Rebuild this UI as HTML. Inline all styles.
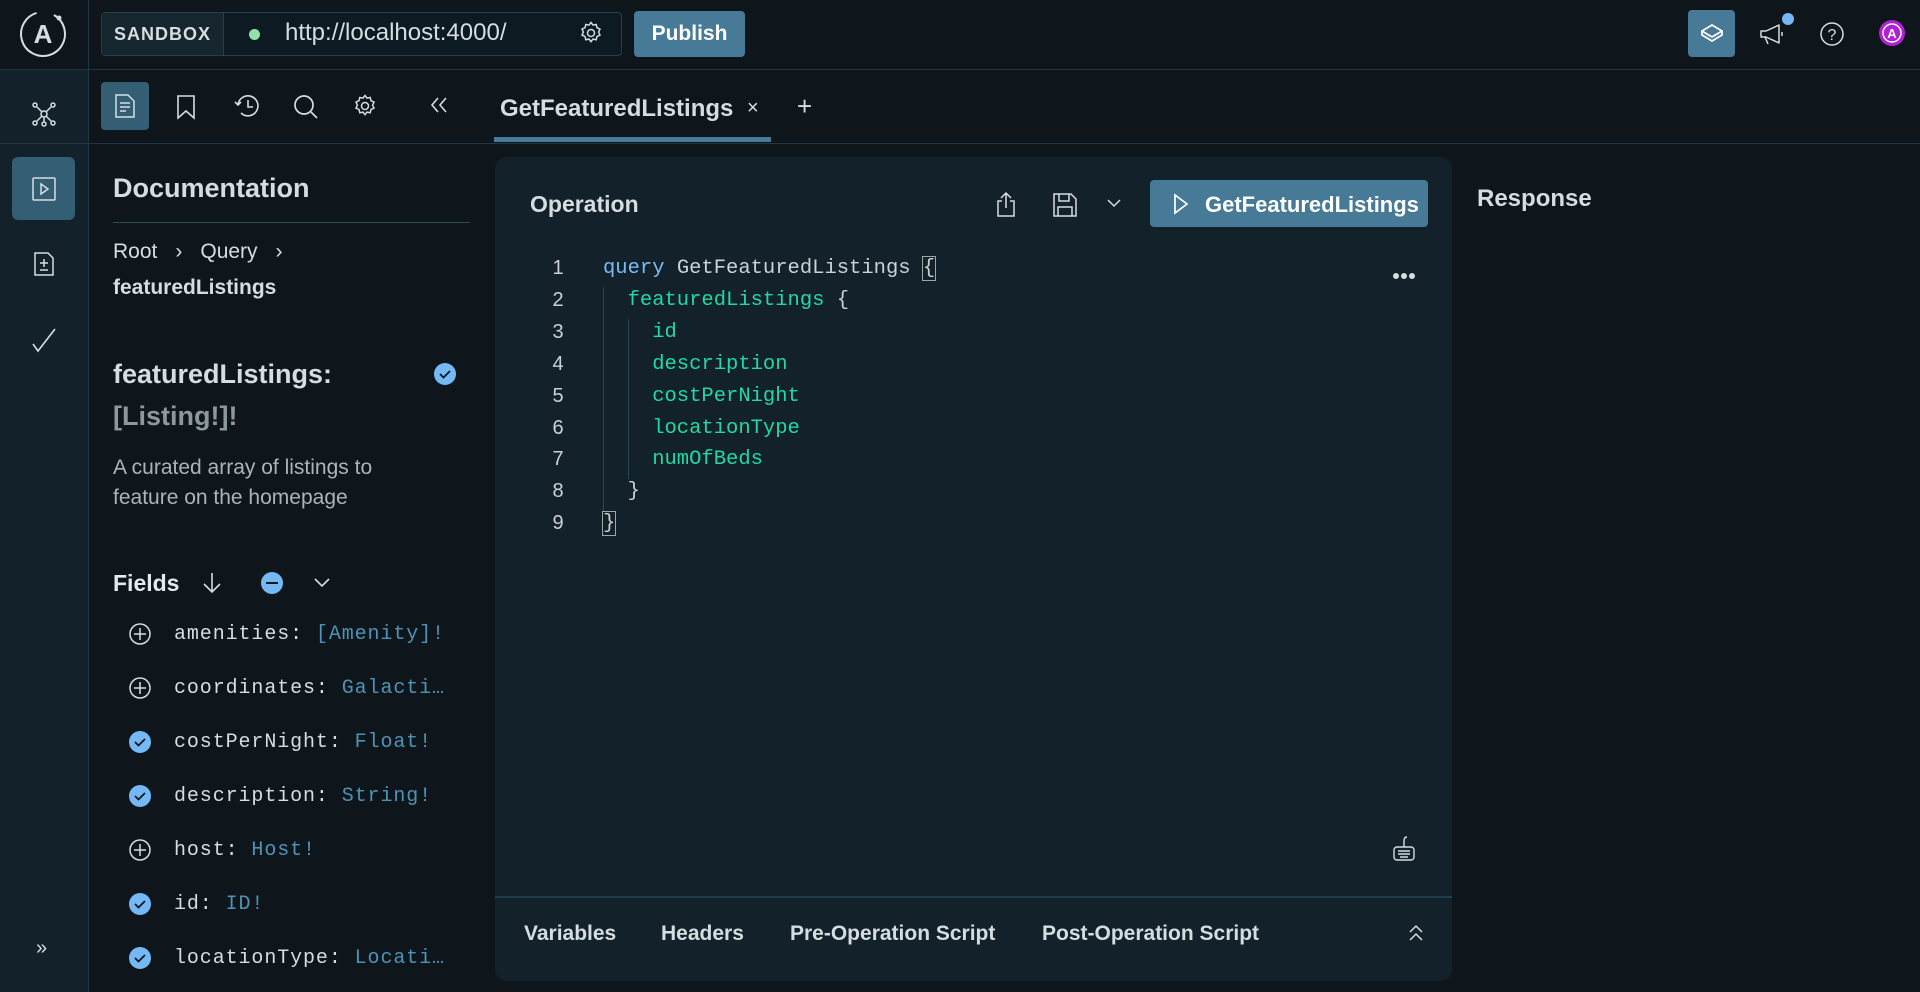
<!DOCTYPE html>
<html><head><meta charset="utf-8"><style>
*{box-sizing:border-box;margin:0;padding:0}
body{width:1920px;height:992px;background:#0e161c;font-family:"Liberation Sans",sans-serif;color:#d6dde1;position:relative;overflow:hidden}
.a{position:absolute}
svg{position:absolute;overflow:visible}
.ln{position:absolute;left:540px;width:36px;text-align:center;font-size:20px;color:#c9d2d6}
.cd{position:absolute;left:603px;font-size:20.5px;white-space:pre;font-family:"Liberation Mono",monospace;color:#c9d2d6}
.g{color:#22d8a4}
.fr{position:absolute;left:174px;font-family:"Liberation Mono",monospace;font-size:20px;letter-spacing:0.9px;color:#d6dde1;white-space:nowrap}
.fr span{color:#4e93b6}
.tb{position:absolute;top:922px;font-size:21px;font-weight:bold;color:#d6dde1}
</style></head><body>
<div class="a" style="left:0;top:69px;width:1920px;height:1px;background:#1f3744"></div>
<div class="a" style="left:88px;top:0;width:1px;height:992px;background:#1f3744"></div>
<svg style="left:0;top:0" width="88" height="69"><circle cx="43" cy="34" r="22" fill="none" stroke="#d6dde1" stroke-width="2" stroke-dasharray="120 18" transform="rotate(-60 43 34)"/><circle cx="59" cy="18" r="2.5" fill="#d6dde1"/><text x="43" y="43" text-anchor="middle" font-family="Liberation Sans" font-weight="bold" font-size="26" fill="#d6dde1">A</text></svg>
<div class="a" style="left:101px;top:12px;width:521px;height:44px;border:1px solid #24404d;border-radius:4px;background:#0e1a21"></div>
<div class="a" style="left:102px;top:13px;width:122px;height:42px;background:#16262e;border-right:1px solid #24404d;font-size:18px;font-weight:bold;letter-spacing:1px;line-height:42px;text-align:center;color:#d6dde1">SANDBOX</div>
<div class="a" style="left:249px;top:29px;width:11px;height:11px;border-radius:50%;background:#8fe3a8"></div>
<div class="a" style="left:285px;top:19px;font-size:24px;color:#d6dde1">http://localhost:4000/</div>
<svg style="left:579px;top:21px" width="24" height="24" viewBox="0 0 24 24" fill="none" stroke="#d6dde1" stroke-width="1.5"><circle cx="12" cy="12" r="3.5"/><path d="M12 1.5l2 2.6 3.2-.6.8 3.2 3 1.4-1.4 3 1.4 3-3 1.4-.8 3.2-3.2-.6-2 2.6-2-2.6-3.2.6-.8-3.2-3-1.4 1.4-3-1.4-3 3-1.4.8-3.2 3.2.6z"/></svg>
<div class="a" style="left:634px;top:11px;width:111px;height:46px;background:#467a96;border-radius:4px;font-size:21px;font-weight:bold;color:#fff;line-height:46px;text-align:center">Publish</div>
<div class="a" style="left:1688px;top:10px;width:47px;height:47px;background:#467a96;border-radius:4px"></div>
<svg style="left:1699px;top:22px" width="26" height="24" viewBox="0 0 26 24" fill="none" stroke="#fff" stroke-width="1.8" stroke-linejoin="round"><path d="M13 3l10 6-10 6-10-6z"/><path d="M3 9v4l10 6 10-6V9"/></svg>
<svg style="left:1758px;top:20px" width="28" height="28" viewBox="0 0 28 28" fill="none" stroke="#d6dde1" stroke-width="1.5" stroke-linejoin="round"><path d="M3 11h5l13-6v18L8 17H3z"/><path d="M7 17l3 7"/><path d="M24 12v4"/></svg>
<div class="a" style="left:1782px;top:13px;width:12px;height:12px;border-radius:50%;background:#74b9f5"></div>
<svg style="left:1820px;top:22px" width="24" height="24"><circle cx="12" cy="12" r="11" fill="none" stroke="#d6dde1" stroke-width="1.5"/><text x="12" y="18" text-anchor="middle" font-family="Liberation Sans" font-size="16" fill="#d6dde1">?</text></svg>
<svg style="left:1878px;top:19px" width="28" height="28"><circle cx="14" cy="14" r="13" fill="#b21fd6"/><circle cx="14" cy="14" r="9" fill="none" stroke="#fff" stroke-width="1.5"/><text x="14" y="19" text-anchor="middle" font-family="Liberation Sans" font-weight="bold" font-size="13" fill="#fff">A</text></svg>

<div class="a" style="left:0;top:70px;width:88px;height:922px;background:#13222a"></div>
<svg style="left:31px;top:101px" width="26" height="26" viewBox="0 0 26 26" fill="none" stroke="#d6dde1" stroke-width="1.5"><circle cx="13" cy="13" r="3"/><circle cx="4" cy="4" r="2"/><circle cx="22" cy="4" r="2"/><circle cx="4" cy="22" r="2"/><circle cx="22" cy="22" r="2"/><circle cx="13" cy="23" r="2"/><path d="M6 6l5 5M20 6l-5 5M6 20l5-5M20 20l-5-5M13 16v5"/></svg>
<div class="a" style="left:12px;top:157px;width:63px;height:63px;background:#345e74;border-radius:6px"></div>
<svg style="left:32px;top:177px" width="24" height="24" viewBox="0 0 24 24" fill="none" stroke="#d6dde1" stroke-width="1.5"><rect x="1" y="1" width="22" height="22" rx="1"/><path d="M9 7l7 5-7 5z"/></svg>
<svg style="left:32px;top:252px" width="24" height="24" viewBox="0 0 24 24" fill="none" stroke="#d6dde1" stroke-width="1.5"><path d="M3 1h13l5 5v17H3z"/><path d="M12 7v8M8 11h8M8 18h8"/></svg>
<svg style="left:31px;top:327px" width="26" height="26" viewBox="0 0 26 26" fill="none" stroke="#d6dde1" stroke-width="1.6"><path d="M2 17l5 7L24 2"/></svg>
<div class="a" style="left:36px;top:937px;font-size:20px;color:#d6dde1">»</div>

<div class="a" style="left:0;top:143px;width:1920px;height:1px;background:#1f3744"></div>
<div class="a" style="left:101px;top:82px;width:48px;height:48px;background:#345e74;border-radius:4px"></div>
<svg style="left:113px;top:94px" width="24" height="24" viewBox="0 0 24 24" fill="none" stroke="#d6dde1" stroke-width="1.5"><path d="M3 1h12l6 6v16H3z"/><path d="M7 9h10M7 13h10M7 17h6"/></svg>
<svg style="left:176px;top:95px" width="20" height="24" viewBox="0 0 20 24" fill="none" stroke="#d6dde1" stroke-width="1.6"><path d="M2 1h16v22l-8-7-8 7z"/></svg>
<svg style="left:234px;top:93px" width="26" height="26" viewBox="0 0 26 26" fill="none" stroke="#d6dde1" stroke-width="1.6"><path d="M4 12a10 10 0 1 1 3 8"/><path d="M1 9l3 3 3-3"/><path d="M14 7v7h5"/></svg>
<svg style="left:293px;top:94px" width="26" height="26" viewBox="0 0 26 26" fill="none" stroke="#d6dde1" stroke-width="1.7"><circle cx="11" cy="11" r="9"/><path d="M18 18l6 6"/></svg>
<svg style="left:353px;top:94px" width="24" height="24" viewBox="0 0 24 24" fill="none" stroke="#d6dde1" stroke-width="1.5"><circle cx="12" cy="12" r="3.5"/><path d="M12 1.5l2 2.6 3.2-.6.8 3.2 3 1.4-1.4 3 1.4 3-3 1.4-.8 3.2-3.2-.6-2 2.6-2-2.6-3.2.6-.8-3.2-3-1.4 1.4-3-1.4-3 3-1.4.8-3.2 3.2.6z"/></svg>
<svg style="left:430px;top:97px" width="18" height="16" viewBox="0 0 18 16" fill="none" stroke="#d6dde1" stroke-width="1.6"><path d="M8 1L2 8l6 7M16 1l-6 7 6 7"/></svg>

<div class="a" style="left:500px;top:95px;font-size:24px;font-weight:bold;color:#d6dde1">GetFeaturedListings</div>
<div class="a" style="left:747px;top:97px;font-size:20px;color:#d6dde1">×</div>
<div class="a" style="left:797px;top:91px;font-size:26px;color:#d6dde1">+</div>
<div class="a" style="left:494px;top:137px;width:277px;height:5px;background:#467a96"></div>

<div class="a" style="left:113px;top:173px;font-size:27px;font-weight:bold;color:#d6dde1">Documentation</div>
<div class="a" style="left:113px;top:222px;width:357px;height:1px;background:#2c4a58"></div>
<div class="a" style="left:113px;top:240px;font-size:21px;color:#d6dde1">Root<span style="margin:0 18px">›</span>Query<span style="margin-left:18px">›</span></div>
<div class="a" style="left:113px;top:276px;font-size:21px;font-weight:bold;color:#d6dde1">featuredListings</div>
<div class="a" style="left:113px;top:359px;font-size:27px;font-weight:bold;color:#d6dde1">featuredListings:</div>
<div class="a" style="left:113px;top:401px;font-size:27px;font-weight:bold;color:#8c989d">[Listing!]!</div>
<svg style="left:434px;top:363px" width="22" height="22"><circle cx="11" cy="11" r="11" fill="#74b9f5"/><path d="M6 11l3.5 3.5L16 8" fill="none" stroke="#0e161c" stroke-width="1.8"/></svg>
<div class="a" style="left:113px;top:453px;font-size:21px;line-height:30px;color:#aab4b9">A curated array of listings to<br>feature on the homepage</div>
<div class="a" style="left:113px;top:570px;font-size:23px;color:#e4eaed;font-weight:bold">Fields</div>
<svg style="left:202px;top:572px" width="20" height="22" viewBox="0 0 20 22" fill="none" stroke="#d6dde1" stroke-width="1.6"><path d="M10 1v19M2 12l8 8 8-8"/></svg>
<svg style="left:261px;top:572px" width="22" height="22"><circle cx="11" cy="11" r="11" fill="#74b9f5"/><path d="M5 11h12" stroke="#0e161c" stroke-width="2"/></svg>
<svg style="left:314px;top:578px" width="16" height="10" viewBox="0 0 16 10" fill="none" stroke="#d6dde1" stroke-width="1.6"><path d="M1 1l7 7 7-7"/></svg>

<svg style="left:129px;top:623px" width="22" height="22"><circle cx="11" cy="11" r="10" fill="none" stroke="#d6dde1" stroke-width="1.5"/><path d="M11 5v12M5 11h12" stroke="#d6dde1" stroke-width="1.5"/></svg>
<div class="fr" style="top:623px">amenities: <span>[Amenity]!</span></div>
<svg style="left:129px;top:677px" width="22" height="22"><circle cx="11" cy="11" r="10" fill="none" stroke="#d6dde1" stroke-width="1.5"/><path d="M11 5v12M5 11h12" stroke="#d6dde1" stroke-width="1.5"/></svg>
<div class="fr" style="top:677px">coordinates: <span>Galacti…</span></div>
<svg style="left:129px;top:731px" width="22" height="22"><circle cx="11" cy="11" r="11" fill="#74b9f5"/><path d="M6 11l3.5 3.5L16 8" fill="none" stroke="#0e161c" stroke-width="1.8"/></svg>
<div class="fr" style="top:731px">costPerNight: <span>Float!</span></div>
<svg style="left:129px;top:785px" width="22" height="22"><circle cx="11" cy="11" r="11" fill="#74b9f5"/><path d="M6 11l3.5 3.5L16 8" fill="none" stroke="#0e161c" stroke-width="1.8"/></svg>
<div class="fr" style="top:785px">description: <span>String!</span></div>
<svg style="left:129px;top:839px" width="22" height="22"><circle cx="11" cy="11" r="10" fill="none" stroke="#d6dde1" stroke-width="1.5"/><path d="M11 5v12M5 11h12" stroke="#d6dde1" stroke-width="1.5"/></svg>
<div class="fr" style="top:839px">host: <span>Host!</span></div>
<svg style="left:129px;top:893px" width="22" height="22"><circle cx="11" cy="11" r="11" fill="#74b9f5"/><path d="M6 11l3.5 3.5L16 8" fill="none" stroke="#0e161c" stroke-width="1.8"/></svg>
<div class="fr" style="top:893px">id: <span>ID!</span></div>
<svg style="left:129px;top:947px" width="22" height="22"><circle cx="11" cy="11" r="11" fill="#74b9f5"/><path d="M6 11l3.5 3.5L16 8" fill="none" stroke="#0e161c" stroke-width="1.8"/></svg>
<div class="fr" style="top:947px">locationType: <span>Locati…</span></div>

<div class="a" style="left:495px;top:157px;width:957px;height:824px;background:#13222a;border-radius:12px"></div>
<div class="a" style="left:530px;top:191px;font-size:23px;font-weight:bold;color:#d6dde1">Operation</div>
<svg style="left:996px;top:192px" width="20" height="26" viewBox="0 0 20 26" fill="none" stroke="#d6dde1" stroke-width="1.5"><path d="M6 9H2v15h16V9h-4M10 16V1M5 6l5-5 5 5"/></svg>
<svg style="left:1053px;top:193px" width="24" height="24" viewBox="0 0 24 24" fill="none" stroke="#d6dde1" stroke-width="1.5"><path d="M1 1h17l5 5v17H1z"/><path d="M6 1v7h10V1M5 23v-9h14v9"/></svg>
<svg style="left:1107px;top:199px" width="14" height="9" viewBox="0 0 14 9" fill="none" stroke="#d6dde1" stroke-width="1.5"><path d="M1 1l6 6 6-6"/></svg>
<div class="a" style="left:1150px;top:180px;width:278px;height:47px;background:#467a96;border-radius:4px"></div>
<svg style="left:1173px;top:194px" width="16" height="20" viewBox="0 0 16 20" fill="none" stroke="#fff" stroke-width="1.7"><path d="M2 1l12 9-12 9z"/></svg>
<div class="a" style="left:1205px;top:192px;font-size:22px;font-weight:bold;color:#fff">GetFeaturedListings</div>

<div class="ln" style="top:257px">1</div><div class="ln" style="top:289px">2</div><div class="ln" style="top:321px">3</div><div class="ln" style="top:353px">4</div><div class="ln" style="top:385px">5</div><div class="ln" style="top:417px">6</div><div class="ln" style="top:448px">7</div><div class="ln" style="top:480px">8</div><div class="ln" style="top:512px">9</div>
<div class="a" style="left:603px;top:287px;width:1px;height:224px;background:#2e4450"></div>
<div class="a" style="left:628px;top:319px;width:1px;height:160px;background:#2e4450"></div>
<div class="cd" style="top:257px"><span style="color:#7cbcf2">query</span> GetFeaturedListings <span style="outline:1px solid #9aa">{</span></div>
<div class="cd g" style="top:289px">  featuredListings <span style="color:#c9d2d6">{</span></div>
<div class="cd g" style="top:321px">    id</div>
<div class="cd g" style="top:353px">    description</div>
<div class="cd g" style="top:385px">    costPerNight</div>
<div class="cd g" style="top:417px">    locationType</div>
<div class="cd g" style="top:448px">    numOfBeds</div>
<div class="cd" style="top:480px">  }</div>
<div class="cd" style="top:512px"><span style="outline:1px solid #9aa">}</span></div>
<svg style="left:1392px;top:272px" width="24" height="8"><circle cx="4" cy="4" r="3" fill="#d6dde1"/><circle cx="12" cy="4" r="3" fill="#d6dde1"/><circle cx="20" cy="4" r="3" fill="#d6dde1"/></svg>
<svg style="left:1393px;top:836px" width="22" height="26" viewBox="0 0 22 26" fill="none" stroke="#d6dde1" stroke-width="1.4"><path d="M14 1c-3 0-3 3-3 5v5"/><rect x="1" y="11" width="20" height="13" rx="3"/><path d="M5 15h12M5 18h12M7 21h8"/></svg>
<div class="a" style="left:495px;top:896px;width:957px;height:2px;background:#1f3e4c"></div>
<div class="tb" style="left:524px">Variables</div>
<div class="tb" style="left:661px">Headers</div>
<div class="tb" style="left:790px">Pre-Operation Script</div>
<div class="tb" style="left:1042px">Post-Operation Script</div>
<svg style="left:1409px;top:924px" width="14" height="18" viewBox="0 0 14 18" fill="none" stroke="#d6dde1" stroke-width="1.5"><path d="M1 8l6-6 6 6M1 16l6-6 6 6"/></svg>

<div class="a" style="left:1477px;top:185px;font-size:24px;font-weight:bold;color:#d6dde1">Response</div>
</body></html>
